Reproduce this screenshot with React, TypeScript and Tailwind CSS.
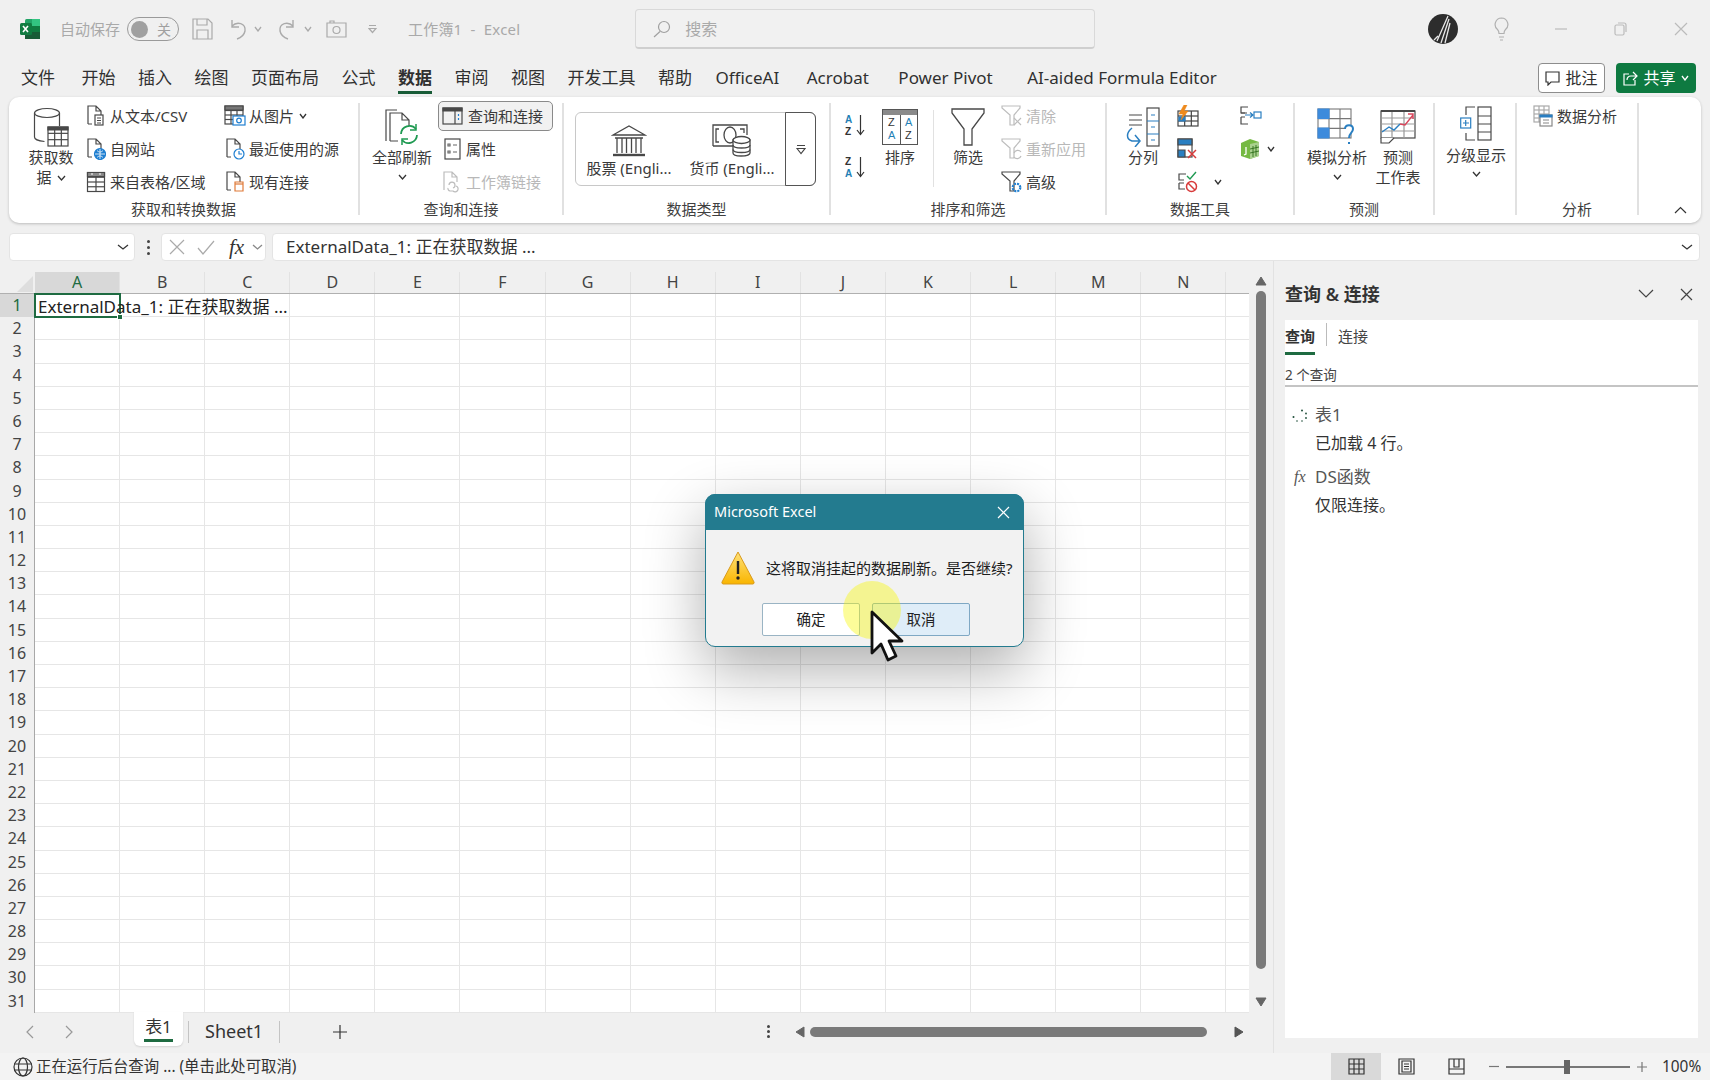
import React from "react";

type IP = { w: number; h: number; children?: React.ReactNode; c?: string; sw?: number; className?: string };
const S = ({ w, h, children, c = "#484848", sw = 1.2, className }: IP) => (
  <svg width={w} height={h} viewBox={`0 0 ${w} ${h}`} fill="none" stroke={c} strokeWidth={sw} className={className}>
    {children}
  </svg>
);
const Chev = ({ c = "#333", w = 9, className }: { c?: string; w?: number; className?: string }) => (
  <S w={w} h={6} c={c} sw={1.3} className={className}>
    <path d={`M1 1l${w / 2 - 1} ${4}l${w / 2 - 1} -${4}`} />
  </S>
);
const Doc = ({ c = "#484848" }: { c?: string }) => <path d="M2 19V1h8l5 5v7M10 1v5h5M2 19h4" stroke={c} />;

const ExcelIcon = () => (
  <svg width="22" height="22" viewBox="0 0 22 22">
    <rect x="6" y="1" width="15" height="20" rx="1.5" fill="#21a366" />
    <rect x="13" y="1" width="8" height="7" fill="#33c481" />
    <rect x="6" y="14" width="15" height="7" fill="#185c37" />
    <rect x="13" y="8" width="8" height="6" fill="#107c41" />
    <rect x="1" y="5" width="12" height="12" rx="1.5" fill="#107c41" />
    <path d="M4 8l5 6M9 8l-5 6" stroke="#fff" strokeWidth="1.6" />
  </svg>
);
const Grid3 = ({ x, y, w, h, cols, rows, c = "#484848" }: { x: number; y: number; w: number; h: number; cols: number; rows: number; c?: string }) => (
  <g stroke={c}>
    <rect x={x} y={y} width={w} height={h} fill="#fff" />
    {Array.from({ length: cols - 1 }, (_, i) => (
      <path key={i} d={`M${x + ((i + 1) * w) / cols} ${y}v${h}`} />
    ))}
    {Array.from({ length: rows - 1 }, (_, i) => (
      <path key={i} d={`M${x} ${y + ((i + 1) * h) / rows}h${w}`} />
    ))}
  </g>
);

const GetData = () => (
  <S w={36} h={40}>
    <ellipse cx="14" cy="6" rx="12.5" ry="4.5" />
    <path d="M1.5 6v24c0 2 4 4 10 4.500M26.500 6v13" />
    <Grid3 x={15} y={20} w={20} h={19} cols={3} rows={3} />
    <path d="M15 20h20v3H15z" fill="#484848" />
  </S>
);
const FromText = () => (
  <S w={20} h={22}>
    <Doc />
    <rect x="9" y="10" width="8" height="10" fill="#fff" />
    <path d="M11 13h4M11 15.500h4M11 18h4" />
  </S>
);
const FromWeb = () => (
  <S w={20} h={22}>
    <Doc />
    <circle cx="14" cy="16" r="5.500" fill="#1f7fd1" stroke="#1f7fd1" />
    <path d="M9 16h10M14 11v10M11 12.500c2 2 4 2 6 0M11 19.500c2-2 4-2 6 0" stroke="#fff" strokeWidth=".8" />
  </S>
);
const FromTable = () => (
  <S w={20} h={22}>
    <Grid3 x={1.500} y={1.500} w={17} h={19} cols={2} rows={4} />
    <path d="M1.500 1.500h17v4h-17z" fill="#8a8a8a" />
    <path d="M5 3h2M13 3h2" stroke="#fff" />
  </S>
);
const FromPic = () => (
  <S w={22} h={22}>
    <Grid3 x={1} y={1} w={18} h={18} cols={3} rows={4} />
    <path d="M1 1h18v4H1z" fill="#777" />
    <rect x="9" y="11" width="12" height="9" fill="#fff" stroke="#1f7fd1" />
    <circle cx="15" cy="15.500" r="2.300" stroke="#1f7fd1" />
  </S>
);
const Recent = () => (
  <S w={20} h={22}>
    <Doc />
    <circle cx="14" cy="16" r="5" fill="#fff" stroke="#1f7fd1" />
    <path d="M14 13v3h3" stroke="#1f7fd1" />
  </S>
);
const Existing = () => (
  <S w={20} h={22}>
    <Doc />
    <path d="M10 11h8v9h-8z" fill="#fff" stroke="#e07b39" />
    <path d="M10 13h8" stroke="#e07b39" />
  </S>
);
const RefreshAll = () => (
  <S w={38} h={40}>
    <path d="M3 34V3h11" />
    <path d="M7 34V6h12l7 7v6M19 6v7h7M7 34h8" />
    <path d="M18 27a8.500 8.500 0 0 1 15-5M34 28a8.500 8.500 0 0 1-15 5" stroke="#1f9a52" strokeWidth="1.800" />
    <path d="M33 17v6h-6M19 38v-6h6" stroke="#1f9a52" strokeWidth="1.500" />
  </S>
);
const QueryPane = () => (
  <S w={21} h={20}>
    <rect x="1" y="2" width="19" height="16" />
    <path d="M1 2h19v3H1z" fill="#484848" />
    <path d="M13 5v13" />
    <path d="M16.500 8v2M16.500 12v2" stroke="#1f7fd1" />
  </S>
);
const Props = () => (
  <S w={17} h={22}>
    <rect x="1" y="1" width="15" height="20" />
    <path d="M4 6h2v2H4zM4 13h2v2H4zM9 7h4M9 14h4" stroke="#666" />
  </S>
);
const WbLinks = () => (
  <S w={20} h={22} c="#bcbcbc">
    <path d="M2 19V1h8l5 5v5M10 1v5h5" />
    <path d="M7 14a3 3 0 1 1 4 3M14 15a3 3 0 1 1-3 5h-3a2.500 2.500 0 0 1-2-3" />
  </S>
);
const Bank = () => (
  <S w={36} h={32} sw={1.300}>
    <path d="M2 10L18 1l16 9z" />
    <path d="M4 13h28M6 13v15M11 13v15M15.500 13v15M20.500 13v15M25 13v15M30 13v15" />
    <path d="M2 30h32" strokeWidth="2.400" />
  </S>
);
const Currency = () => (
  <S w={40} h={34} sw={1.300}>
    <path d="M1 23V2h34v10M1 23h20" />
    <path d="M7 6H4v13h3M28 6h4v4" />
    <ellipse cx="18" cy="12" rx="6" ry="8" />
    <g fill="#fff">
      <path d="M21 17v13c0 2 4 3 8 3s9-1 9-3V17z" />
      <ellipse cx="29.500" cy="17" rx="8.500" ry="3.500" />
    </g>
    <path d="M21 22c0 2 4 3 8.500 3s8.500-1 8.500-3M21 26.500c0 2 4 3 8.500 3s8.500-1 8.500-3" />
  </S>
);
const SortAZ = ({ top, bot }: { top: string; bot: string }) => (
  <div className="relative w-[21px] h-[23px] font-['Liberation_Sans',sans-serif] text-[10px] leading-[11.500px] font-bold">
    <span className={`absolute left-0 top-0 ${top === "A" ? "text-[#1f7fb5]" : "text-[#333]"}`}>{top}</span>
    <span className={`absolute left-0 top-[11.500px] ${bot === "A" ? "text-[#1f7fb5]" : "text-[#333]"}`}>{bot}</span>
    <S w={9} h={22} c="#333" className="absolute left-[11px] top-0">
      <path d="M4.500 1v19M1 16l3.500 4.500L8 16" />
    </S>
  </div>
);
const SortIcon = () => (
  <div className="relative w-[36px] h-[36px] border border-[#555] bg-white font-['Liberation_Sans',sans-serif] text-[11px] leading-[13px]">
    <div className="h-[5px] bg-[#8a8a8a]" />
    <div className="absolute left-[17px] top-[5px] bottom-0 w-px bg-[#555]" />
    <span className="absolute left-[5px] top-[6px] text-[#333]">Z</span>
    <span className="absolute left-[5px] top-[19px] text-[#1f7fb5]">A</span>
    <span className="absolute left-[22px] top-[6px] text-[#1f7fb5]">A</span>
    <span className="absolute left-[22px] top-[19px] text-[#333]">Z</span>
  </div>
);
const Funnel = () => (
  <S w={36} h={38} sw={1.300}>
    <path d="M2 1h32v4L22 21v16h-8V21L2 5z" />
  </S>
);
const SmallFunnel = ({ c, kind }: { c: string; kind: "x" | "r" | "g" }) => (
  <S w={22} h={22} c={c}>
    <path d="M1 1h18v2l-6 7v10l-4 0V10L1 3z" fill="#fff" />
    {kind === "x" && <path d="M13 13l7 7M20 13l-7 7" />}
    {kind === "r" && <path d="M13 15a4 4 0 0 1 7-1M20 18a4 4 0 0 1-7 1" />}
    {kind === "g" && <circle cx="15.500" cy="16.500" r="3.800" stroke="#1f7fd1" strokeWidth="2.200" strokeDasharray="2 1" />}
  </S>
);
const TextCols = () => (
  <S w={38} h={40}>
    <path d="M5 8h13M5 13h13M5 18h13" />
    <rect x="23" y="1" width="12" height="38" />
    <path d="M23 14h12M23 27h12M27 8h4M27 20h4M27 33h4" stroke="#2a7fc1" />
    <path d="M8 21c-6 5-6 11 0 13h7M11 28l5 6-5 6" stroke="#2a7fc1" strokeWidth="1.500" />
  </S>
);
const FlashFill = () => (
  <S w={22} h={22}>
    <Grid3 x={1} y={6} w={20} h={15} cols={3} rows={3} c="#444" />
    <path d="M2 12h6v4H2z" fill="#2a7fc1" stroke="#2a7fc1" />
    <path d="M7 0L2 9h4l-2 6 7-9H7l3-6z" fill="#ee8a1d" stroke="#ee8a1d" strokeWidth=".6" />
  </S>
);
const RemoveDup = () => (
  <S w={22} h={22}>
    <rect x="1" y="1" width="14" height="18" />
    <path d="M1 1h14v6H1z" fill="#2a7fc1" />
    <path d="M1 12h7v7H1z" fill="#2a7fc1" />
    <path d="M11 12l8 8M19 12l-8 8" stroke="#d83b3b" strokeWidth="1.500" />
  </S>
);
const Validate = () => (
  <S w={22} h={22}>
    <path d="M9 3H2v6h5M2 12v6h6M2 12h5" />
    <path d="M10 5l3 3 6-7" stroke="#1f9a52" strokeWidth="1.400" />
    <circle cx="14.500" cy="15.500" r="5" stroke="#d83b3b" strokeWidth="1.500" />
    <path d="M11 12l7 7" stroke="#d83b3b" strokeWidth="1.500" />
  </S>
);
const Consolidate = () => (
  <S w={22} h={20}>
    <path d="M8 1H1v6h6M1 11v7h7" />
    <path d="M1 7h4M1 11h4" />
    <path d="M5 9h8M10 6.500L13 9l-3 2.500" stroke="#2a7fc1" />
    <rect x="14" y="6" width="7" height="6" stroke="#2a7fc1" />
  </S>
);
const DataModel = () => (
  <svg width="20" height="22" viewBox="0 0 20 22">
    <path d="M1 5l9-4 9 3v14l-9 3-9-3z" fill="#75b943" />
    <path d="M10 6l9-2v14l-9 3z" fill="#a9d18e" />
    <path d="M13 8v11M16 7v11M10 11l9-2M10 15l9-2" stroke="#2f6f1c" strokeWidth=".9" />
    <path d="M6 9v7l-2 1" stroke="#fff" strokeWidth="1.300" fill="none" />
  </svg>
);
const WhatIf = () => (
  <S w={40} h={38} sw={1.100}>
    <Grid3 x={1} y={1} w={33} h={29} cols={3} rows={3} c="#777" />
    <path d="M1 1h11v9.500H1zM1 20h11v10H1z" fill="#3d8bdc" stroke="#3d8bdc" />
    <path d="M28 21c0-5 8-5 8 0 0 4-4 4-4 9M32 34v2" stroke="#2a7fc1" strokeWidth="2" fill="#fff" />
  </S>
);
const Forecast = () => (
  <S w={36} h={34}>
    <rect x="1" y="1" width="34" height="27" />
    <path d="M1 8h34M1 14h34M1 21h34M12 1v27M24 1v27" stroke="#999" />
    <path d="M1 1h34" strokeWidth="2" />
    <path d="M2 22l7-5 5 3 6-6" stroke="#2a7fc1" strokeWidth="1.400" />
    <path d="M20 14l5 1 8-10M28 4h5v5" stroke="#d8455b" strokeWidth="1.400" />
    <path d="M1 28v5h8l5-5" fill="#fff" />
  </S>
);
const Outline = () => (
  <S w={32} h={36}>
    <path d="M15 1H6v8M15 34H6v-7" />
    <rect x="0.700" y="12" width="10" height="10" stroke="#2a7fc1" />
    <path d="M3 17h6M5.700 14v6" stroke="#2a7fc1" />
    <rect x="18" y="1" width="13" height="33" />
    <path d="M18 10h13M18 18h13M18 26h13" />
  </S>
);
const DataAnalysis = () => (
  <S w={20} h={22} c="#999">
    <Grid3 x={1} y={1} w={15} h={16} cols={3} rows={4} c="#aaa" />
    <rect x="7" y="10" width="12" height="11" fill="#fff" stroke="#888" />
    <path d="M7 10h12v2H7z" fill="#2a7fc1" stroke="#2a7fc1" />
    <path d="M10 15h6M10 18h6" stroke="#888" />
  </S>
);

const Small = ({ icon, label, gray, extra }: { icon: React.ReactNode; label: string; gray?: boolean; extra?: React.ReactNode }) => (
  <div className="h-[28px] flex items-center whitespace-nowrap">
    <div className="w-[22px] flex justify-center shrink-0">{icon}</div>
    <span className={`ml-[3px] text-[15px] ${gray ? "text-[#b8b8b8]" : "text-[#3a3a3a]"}`}>{label}</span>
    {extra}
  </div>
);
const Big = ({ icon, lines, chev, w }: { icon: React.ReactNode; lines: string[]; chev?: boolean; w: string }) => (
  <div className={`${w} shrink-0 pt-[5px] flex flex-col items-center text-[15px] text-[#3a3a3a] leading-[19px]`}>
    <div className="h-[40px] flex items-center justify-center">{icon}</div>
    <div className="mt-[1px] whitespace-nowrap">{lines[0]}</div>
    {lines[1] && (
      <div className="mt-px whitespace-nowrap flex items-center gap-[5px]">
        {lines[1]}
        {chev && <Chev />}
      </div>
    )}
    {!lines[1] && chev && (
      <div className="h-[20px] flex items-center">
        <Chev />
      </div>
    )}
  </div>
);
const Group = ({ w, label, children, sep = true }: { w: string; label?: string; children: React.ReactNode; sep?: boolean }) => (
  <div className={`${w} shrink-0 h-[112px] mt-[6px] flex flex-col ${sep ? "border-r-2 border-[#e1e1e1]" : ""}`}>
    <div className="h-[100px] flex -translate-y-px">{children}</div>
    <div className="h-[12px] leading-[12px] text-[15px] text-[#3f3f3f] text-center whitespace-nowrap">{label}</div>
  </div>
);

const tabs: [string, string][] = [
  ["文件", "-ml-px"],
  ["开始", "ml-[4px]"],
  ["插入", ""],
  ["绘图", ""],
  ["页面布局", ""],
  ["公式", ""],
  ["数据", "font-semibold"],
  ["审阅", ""],
  ["视图", ""],
  ["开发工具", ""],
  ["帮助", ""],
  ["OfficeAI", "ml-[1px]"],
  ["Acrobat", "ml-[5px]"],
  ["Power Pivot", "ml-[7px]"],
  ["AI-aided Formula Editor", "ml-[12px]"],
];

const cols = ["A", "B", "C", "D", "E", "F", "G", "H", "I", "J", "K", "L", "M", "N"];
const rows = Array.from({ length: 31 }, (_, i) => i + 1);

const TitleBar = () => (
  <div className="h-[62px] pb-[4px] flex items-center text-[15px] text-[#a9a9a9]">
    <div className="ml-[19px] w-[22px] flex"><ExcelIcon /></div>
    <span className="ml-[19px] whitespace-nowrap">自动保存</span>
    <div className="ml-[7px] w-[52px] h-[24px] rounded-full border border-[#9a9a9a] flex items-center pl-[3px] text-[14px] text-[#a0a0a0]">
      <div className="w-[17px] h-[17px] rounded-full bg-[#a0a0a0]" />
      <span className="ml-[9px]">关</span>
    </div>
    <S w={21} h={22} c="#aaa" className="ml-[13px]">
      <path d="M1 1h15l4 4v16H1zM5 1v6h10V1M5 21v-9h11v9" />
    </S>
    <S w={19} h={22} c="#aaa" sw={1.400} className="ml-[15px]">
      <path d="M4 2v7h7M4 8c5-5 14-3 13 5-1 5-5 7-8 8" />
    </S>
    <Chev c="#aaa" w={8} className="ml-[7px]" />
    <S w={19} h={22} c="#aaa" sw={1.400} className="ml-[16px]">
      <path d="M15 2v7H8M15 8C10 3 1 5 2 13c1 5 5 7 8 8" />
    </S>
    <Chev c="#aaa" w={8} className="ml-[7px]" />
    <S w={21} h={18} c="#aaa" className="ml-[14px]">
      <path d="M1 3h19v14H1zM4 3V1h4v2" />
      <circle cx="10.500" cy="10" r="3.500" />
    </S>
    <S w={9} h={10} c="#aaa" className="ml-[21px]">
      <path d="M1 1.500h7M1 4.500l3.500 4 3.500-4z" />
    </S>
    <span className="ml-[31px] whitespace-nowrap tracking-[0.2px]">工作簿1&nbsp; -&nbsp; Excel</span>
    <div className="ml-[115px] w-[460px] h-[40px] border border-[#d9d9d9] border-b-[2px] border-b-[#cfcfcf] rounded-[4px] bg-[#f1f1f1] flex items-center">
      <S w={18} h={18} c="#a0a0a0" className="ml-[17px]">
        <circle cx="11" cy="7" r="5.500" />
        <path d="M7 11.500L1 17" />
      </S>
      <span className="ml-[14px] text-[16px]">搜索</span>
    </div>
    <div className="ml-[333px] relative w-[30px] h-[30px] rounded-full bg-[#2d2d2d] overflow-hidden">
      <svg width="30" height="30" viewBox="0 0 30 30" className="absolute inset-0">
        <path d="M20 2L9 27M21 5L13 29M22 9L17 29M10 22l-4 4" stroke="#e8e8e8" strokeWidth="1.300" />
      </svg>
    </div>
    <S w={15} h={24} c="#b0b0b0" className="ml-[36px]">
      <path d="M7.500 1a6.500 6.500 0 0 0-4 11.500c1 1 1.500 2 1.500 4h5c0-2 .5-3 1.500-4A6.500 6.500 0 0 0 7.500 1zM5 20h5M6 23h3" />
    </S>
    <S w={14} h={4} c="#bbb" className="ml-[45px]">
      <path d="M1 2h12" />
    </S>
    <S w={13} h={14} c="#bbb" className="ml-[46px]">
      <rect x="1" y="3" width="9" height="10" rx="1.500" />
      <path d="M4 1h6a2 2 0 0 1 2 2v7" />
    </S>
    <S w={14} h={14} c="#bbb" className="ml-[47px]">
      <path d="M1 1l12 12M13 1L1 13" />
    </S>
  </div>
);

const TabRow = () => (
  <div className="h-[35px] flex items-start pl-[22px] gap-[22.500px] text-[17px] text-[#303030] leading-[34px] relative -mt-[1px]">
    {tabs.map(([t, c]) => (
      <div key={t} className={`relative whitespace-nowrap ${c}`}>
        {t}
        {t === "数据" && <div className="absolute left-0 right-0 top-[30px] h-[2.500px] bg-[#185c37]" />}
      </div>
    ))}
    <div className="absolute left-[1538px] top-[2px] w-[67px] h-[30px] border border-[#8d8d8d] rounded-[4px] bg-white flex items-center justify-center gap-[5px] text-[16px]">
      <S w={15} h={15} c="#333"><path d="M1 1h13v10H6l-3 3v-3H1z" /></S>
      批注
    </div>
    <div className="absolute left-[1616px] top-[2px] w-[80px] h-[30px] rounded-[4px] bg-[#0e7a41] flex items-center justify-center gap-[5px] text-[16px] text-white">
      <S w={15} h={15} c="#fff"><path d="M10 1l4 4-4 4M14 5H8c-3 0-4 2-4 4M6 3H1v11h11V9" /></S>
      共享
      <Chev c="#fff" w={8} />
    </div>
  </div>
);

const Ribbon = () => (
  <div className="mx-[9px] w-[1692px] h-[126px] bg-white rounded-[10px] shadow-[0_1px_3px_rgba(0,0,0,0.22)] flex">
    <Group w="w-[351px]" label="获取和转换数据">
      <div className="ml-[17px]" />
      <Big w="w-[50px]" icon={<GetData />} lines={["获取数", "据"]} chev />
      <div className="ml-[9px] w-[137px]">
        <Small icon={<FromText />} label="从文本/CSV" />
        <div className="mt-[5px]" />
        <Small icon={<FromWeb />} label="自网站" />
        <div className="mt-[5px]" />
        <Small icon={<FromTable />} label="来自表格/区域" />
      </div>
      <div className="ml-[2px]">
        <Small icon={<FromPic />} label="从图片" extra={<Chev w={8} className="ml-[5px]" />} />
        <div className="mt-[5px]" />
        <Small icon={<Recent />} label="最近使用的源" />
        <div className="mt-[5px]" />
        <Small icon={<Existing />} label="现有连接" />
      </div>
    </Group>
    <Group w="w-[204px]" label="查询和连接">
      <div className="ml-[9px]" />
      <Big w="w-[66px]" icon={<RefreshAll />} lines={["全部刷新"]} chev />
      <div className="ml-[3px]">
        <div className="relative h-[28px] flex items-center">
          <div className="absolute left-0 top-[-1px] w-[115px] h-[30px] border border-[#8a8a8a] rounded-[5px] bg-[#f1f1f1]" />
          <div className="relative flex items-center pl-[4px] whitespace-nowrap">
            <QueryPane />
            <span className="ml-[5px] text-[15px] text-[#3a3a3a]">查询和连接</span>
          </div>
        </div>
        <div className="mt-[5px] pl-[3px]"><Small icon={<Props />} label="属性" /></div>
        <div className="mt-[5px] pl-[3px]"><Small icon={<WbLinks />} label="工作簿链接" gray /></div>
      </div>
    </Group>
    <Group w="w-[267px]" label="数据类型">
      <div className="ml-[11px] mt-[10px] w-[241px] h-[74px] border border-[#c8c8c8] rounded-[6px] flex">
        <div className="w-[210px] flex pt-[12px]">
          <div className="w-[106px] flex flex-col items-center text-[15px] text-[#3a3a3a]">
            <Bank />
            <span className="whitespace-nowrap">股票 (Engli...</span>
          </div>
          <div className="w-[100px] -mt-[2px] flex flex-col items-center text-[15px] text-[#3a3a3a]">
            <Currency />
            <span className="whitespace-nowrap">货币 (Engli...</span>
          </div>
        </div>
        <div className="flex-1 -m-px border border-[#555] rounded-r-[6px] flex items-center justify-center">
          <S w={10} h={11} c="#444"><path d="M1 1.500h8M1 4.500l4 5 4-5z" /></S>
        </div>
      </div>
    </Group>
    <Group w="w-[276px]" label="排序和筛选">
      <div className="ml-[14px] pt-[12px] w-[21px]">
        <SortAZ top="A" bot="Z" />
        <div className="mt-[19px]"><SortAZ top="Z" bot="A" /></div>
      </div>
      <Big w="w-[36px] ml-[16px]" icon={<SortIcon />} lines={["排序"]} />
      <div className="ml-[15px] mt-[8px] h-[77px] w-px bg-[#e1e1e1]" />
      <Big w="w-[36px] ml-[16px]" icon={<Funnel />} lines={["筛选"]} />
      <div className="ml-[15px]">
        <Small icon={<SmallFunnel c="#bdbdbd" kind="x" />} label="清除" gray />
        <div className="mt-[5px]" />
        <Small icon={<SmallFunnel c="#bdbdbd" kind="r" />} label="重新应用" gray />
        <div className="mt-[5px]" />
        <Small icon={<SmallFunnel c="#484848" kind="g" />} label="高级" />
      </div>
    </Group>
    <Group w="w-[188px]" label="数据工具">
      <Big w="w-[40px] ml-[16px]" icon={<TextCols />} lines={["分列"]} />
      <div className="ml-[14px] w-[52px] flex flex-col gap-[5px]">
        <div className="h-[28px] flex items-center"><FlashFill /></div>
        <div className="h-[28px] flex items-center"><RemoveDup /></div>
        <div className="h-[28px] flex items-center">
          <Validate />
          <Chev w={8} className="ml-[15px]" />
        </div>
      </div>
      <div className="ml-[11px] flex flex-col gap-[5px]">
        <div className="h-[28px] flex items-center"><Consolidate /></div>
        <div className="h-[28px] flex items-center">
          <DataModel />
          <Chev w={8} className="ml-[7px]" />
        </div>
      </div>
    </Group>
    <Group w="w-[140px]" label="预测">
      <Big w="w-[62px] ml-[11px]" icon={<WhatIf />} lines={["模拟分析"]} chev />
      <Big w="w-[48px] ml-[6px]" icon={<Forecast />} lines={["预测", "工作表"]} />
    </Group>
    <Group w="w-[82px]">
      <div className="ml-[10px] w-[62px] flex flex-col items-center text-[15px] text-[#3a3a3a] leading-[20px] pt-[4px]">
        <Outline />
        <span className="mt-[3px] whitespace-nowrap">分级显示</span>
        <div className="h-[18px] flex items-center"><Chev /></div>
      </div>
    </Group>
    <Group w="w-[122px]" label="分析">
      <div className="ml-[15px]">
        <Small icon={<DataAnalysis />} label="数据分析" />
      </div>
    </Group>
    <div className="flex-1 flex justify-center items-end pb-[9px] pl-[20px]">
      <S w={13} h={8} c="#333"><path d="M1 7l5.500-5.500L12 7" /></S>
    </div>
  </div>
);

const FormulaBar = () => (
  <div className="mt-[10px] h-[28px] flex items-stretch">
    <div className="ml-[9px] w-[126px] bg-white rounded-[4px] border border-[#e4e4e4] flex items-center justify-end pr-[5px]">
      <Chev w={12} c="#333" />
    </div>
    <div className="w-[26px] flex flex-col items-center justify-center gap-[3px]">
      {[0, 1, 2].map((i) => (
        <div key={i} className="w-[3px] h-[3px] rounded-full bg-[#444]" />
      ))}
    </div>
    <div className="w-[105px] bg-white rounded-[4px] border border-[#e4e4e4] flex items-center text-[#333]">
      <S w={16} h={16} c="#aaa" className="ml-[7px]"><path d="M1 1l14 14M15 1L1 15" /></S>
      <S w={18} h={15} c="#aaa" className="ml-[12px]"><path d="M1 8l5 6L17 1" /></S>
      <span className="ml-[14px] text-[21px] leading-none italic font-['Liberation_Serif',serif]">fx</span>
      <Chev w={11} c="#888" className="ml-[8px]" />
    </div>
    <div className="ml-[6px] w-[1428px] bg-white rounded-[4px] border border-[#e4e4e4] flex items-center pl-[13px] text-[17px] text-[#333]">
      <span className="flex-1 whitespace-nowrap">ExternalData_1: 正在获取数据 ...</span>
      <Chev w={12} c="#333" className="mr-[6px]" />
    </div>
  </div>
);

const Sheet = () => (
  <div className="w-[1249px] pt-[11px]">
    <div className="h-[22px] flex border-b border-[#b0b0b0]">
      <div className="w-[35px] shrink-0 flex items-end justify-end pr-[2px] pb-[1px]">
        <svg width="16" height="16"><path d="M16 0v16H0z" fill="#dedede" /></svg>
      </div>
      {cols.map((c) => (
        <div
          key={c}
          className={`w-[85.100px] shrink-0 text-center text-[16px] leading-[20px] border-r border-[#e2e2e2] ${
            c === "A" ? "bg-[#d8d8d8] text-[#1e6b41]" : "text-[#444]"
          }`}
        >
          {c}
        </div>
      ))}
    </div>
    {rows.map((r) => (
      <div key={r} className="h-[23.200px] flex">
        <div
          className={`w-[35px] shrink-0 text-center text-[16px] leading-[23px] border-r border-[#a8a8a8] ${
            r === 1 ? "bg-[#d8d8d8] text-[#1e6b41]" : "text-[#444]"
          }`}
        >
          {r}
        </div>
        {r === 1 ? (
          <>
            <div className="relative w-[85.100px] shrink-0 bg-white">
              <div className="absolute -left-px -top-px w-[87px] h-[25px] border-2 border-[#1e6b41] z-10" />
              <div className="absolute right-[-3px] bottom-[-3px] w-[6px] h-[6px] bg-[#1e6b41] border border-white z-20" />
              <span className="absolute left-[3px] top-0 z-20 whitespace-nowrap text-[17px] leading-[25px] text-[#222]">ExternalData_1: 正在获取数据 ...</span>
            </div>
            <div className="w-[170.200px] shrink-0 bg-white border-r border-b border-[#e6e6e6]" />
            {cols.slice(3).map((c) => (
              <div key={c} className="w-[85.100px] shrink-0 bg-white border-r border-b border-[#e6e6e6]" />
            ))}
            <div className="flex-1 bg-white border-b border-[#e6e6e6]" />
          </>
        ) : (
          <>
            {cols.map((c) => (
              <div key={c} className="w-[85.100px] shrink-0 bg-white border-r border-b border-[#e6e6e6]" />
            ))}
            <div className="flex-1 bg-white border-b border-[#e6e6e6]" />
          </>
        )}
      </div>
    ))}
  </div>
);

const VScroll = () => (
  <div className="w-[24px] pt-[15px] flex flex-col items-center">
    <svg width="12" height="10"><path d="M6 1l5 8H1z" fill="#666" stroke="#666" strokeLinejoin="round" /></svg>
    <div className="mt-[5px] w-[10px] h-[678px] rounded-full bg-[#7a7a7a]" />
    <svg width="12" height="10" className="mt-[28px]"><path d="M6 9L1 1h10z" fill="#666" stroke="#666" strokeLinejoin="round" /></svg>
  </div>
);

const SheetTabs = () => (
  <div className="h-[40px] -mt-px flex items-center text-[#333]">
    <S w={9} h={14} c="#999" className="ml-[25px]"><path d="M8 1L2 7l6 6" /></S>
    <S w={9} h={14} c="#999" className="ml-[31px]"><path d="M1 1l6 6-6 6" /></S>
    <div className="ml-[60px] w-[49px] h-[34px] -mt-[6px] bg-white rounded-b-[6px] shadow-[0_1px_2px_rgba(0,0,0,0.12)] relative text-center text-[17px] leading-[30px]">
      表1
      <div className="absolute left-[10px] right-[10px] bottom-[4px] h-[2.500px] bg-[#1e6b41]" />
    </div>
    <div className="ml-[5px] w-px h-[22px] bg-[#c4c4c4]" />
    <span className="ml-[16px] w-[57px] text-[18px] whitespace-nowrap">Sheet1</span>
    <div className="ml-[17px] w-px h-[22px] bg-[#c4c4c4]" />
    <S w={14} h={14} c="#333" className="ml-[53px]"><path d="M7 0v14M0 7h14" /></S>
    <div className="ml-[420px] flex flex-col gap-[2px]">
      {[0, 1, 2].map((i) => (
        <div key={i} className="w-[3px] h-[3px] rounded-full bg-[#444]" />
      ))}
    </div>
    <svg width="10" height="12" className="ml-[25px]"><path d="M1 6l8-5v10z" fill="#666" stroke="#666" strokeLinejoin="round" /></svg>
    <div className="ml-[5px] w-[397px] h-[10px] rounded-full bg-[#7a7a7a]" />
    <svg width="10" height="12" className="ml-[27px]"><path d="M9 6L1 1v10z" fill="#555" stroke="#555" strokeLinejoin="round" /></svg>
  </div>
);

const Pane = () => (
  <div className="flex-1 pl-[11px] pr-[12px]">
    <div className="h-[59px] pt-[7px] flex items-center">
      <span className="text-[18px] font-semibold text-[#333] flex-1 whitespace-nowrap">查询 &amp; 连接</span>
      <S w={16} h={10} c="#444" className="mr-[26px]"><path d="M1 1l7 7 7-7" /></S>
      <S w={13} h={13} c="#444" className="mr-[5px]"><path d="M1 1l11 11M12 1L1 12" /></S>
    </div>
    <div className="w-[413px] h-[718px] bg-white">
      <div className="h-[35px] flex items-start pt-[3px] text-[15px] relative">
        <div className="relative font-semibold text-[#333] leading-[26px]">
          查询
          <div className="absolute left-0 w-[30px] top-[29px] h-[3px] bg-[#1e6b41]" />
        </div>
        <div className="ml-[11px] w-px h-[23px] bg-[#bbb]" />
        <div className="ml-[11px] text-[#444] leading-[26px]">连接</div>
      </div>
      <div className="h-[32px] pt-[11px] text-[13.500px] leading-[18px] text-[#444] border-b-2 border-[#c4c4c4]">2 个查询</div>
      <div className="pt-[16px] flex">
        <div className="w-[30px] pl-[7px] pt-[6px]">
          <svg width="16" height="14" viewBox="0 0 16 14" fill="#1f4f3a">
            <circle cx="10" cy="1.500" r="1" /><circle cx="14" cy="4.500" r=".9" /><circle cx="14" cy="9" r=".9" />
            <circle cx="10" cy="12" r=".8" /><circle cx="5" cy="12" r=".8" /><circle cx="1.500" cy="8" r="1" />
          </svg>
        </div>
        <div>
          <div className="text-[17px] leading-[24px] text-[#555]">表1</div>
          <div className="mt-[4px] text-[16px] leading-[24px] text-[#333]">已加载 4 行。</div>
        </div>
      </div>
      <div className="pt-[10px] flex">
        <div className="w-[30px] pl-[9px] font-['Liberation_Serif',serif] italic text-[16px] leading-[24px] text-[#555]">fx</div>
        <div>
          <div className="text-[17px] leading-[24px] text-[#555]">DS函数</div>
          <div className="mt-[4px] text-[16px] leading-[24px] text-[#333]">仅限连接。</div>
        </div>
      </div>
    </div>
  </div>
);

const StatusBar = () => (
  <div className="h-[27px] bg-[#f3f3f3] flex items-center text-[15.400px] text-[#333] shrink-0">
    <svg width="20" height="20" viewBox="0 0 20 20" fill="none" stroke="#333" strokeWidth="1.200" className="ml-[13px]">
      <circle cx="10" cy="10" r="9" />
      <ellipse cx="10" cy="10" rx="4.500" ry="9" />
      <path d="M1 7h18M1 13h18" />
    </svg>
    <span className="ml-[3px] w-[1295px] whitespace-nowrap">正在运行后台查询 ... (单击此处可取消)</span>
    <div className="w-[50px] h-full bg-[#d9d9d9] flex items-center justify-center">
      <S w={17} h={17} c="#333"><path d="M1 1h15v15H1zM1 6h15M1 11h15M6 1v15M11 1v15" /></S>
    </div>
    <div className="w-[50px] flex justify-center">
      <S w={17} h={17} c="#333"><path d="M1 1h15v15H1zM4 3h9v11H4zM6 6h5M6 8.500h5M6 11h5" /></S>
    </div>
    <div className="w-[50px] flex justify-center">
      <S w={17} h={17} c="#333"><path d="M1 1h15v15H1zM6 1v8h5V1M1 11h15" /></S>
    </div>
    <S w={10} h={3} c="#777" className="ml-[8px]"><path d="M0 1.500h10" /></S>
    <div className="ml-[7px] w-[124px] h-[2px] bg-[#777] relative">
      <div className="absolute left-[58px] top-[-6px] w-[6px] h-[14px] bg-[#666]" />
    </div>
    <S w={10} h={10} c="#777" className="ml-[7px]"><path d="M0 5h10M5 0v10" /></S>
    <span className="ml-[15px] whitespace-nowrap">100%</span>
  </div>
);

const Dialog = () => (
  <div className="absolute left-[705px] top-[494px] w-[319px] h-[153px] rounded-[10px] border border-[#237b8f] bg-[#f2f2f2] shadow-[0_22px_60px_rgba(0,0,0,0.32)] z-30">
    <div className="h-[36px] -mt-px -mx-px bg-[#237b8f] rounded-t-[10px] flex items-center pl-[9px] pr-[14px] text-white text-[14.500px]">
      <span className="flex-1">Microsoft Excel</span>
      <S w={13} h={13} c="#fff"><path d="M1 1l11 11M12 1L1 12" /></S>
    </div>
    <div className="flex items-center h-[73px] pl-[14px] pt-[3px]">
      <svg width="36" height="36" viewBox="0 0 36 36">
        <defs>
          <linearGradient id="wg" x1="0" y1="0" x2="0" y2="1">
            <stop offset="0" stopColor="#ffe27a" />
            <stop offset="1" stopColor="#f9b500" />
          </linearGradient>
        </defs>
        <path d="M18 2L34 32a1.500 1.500 0 0 1-1 2H3a1.500 1.500 0 0 1-1-2z" fill="url(#wg)" stroke="#d99a1c" strokeLinejoin="round" />
        <rect x="16.800" y="11" width="2.400" height="13" fill="#222" />
        <circle cx="18" cy="28" r="1.700" fill="#222" />
      </svg>
      <span className="ml-[10px] text-[15px] text-[#1e1e1e] whitespace-nowrap">这将取消挂起的数据刷新。是否继续?</span>
    </div>
    <div className="flex">
      <div className="ml-[56px] w-[98px] h-[33px] rounded-[2px] border border-[#9ab4c4] bg-white flex items-center justify-center text-[14.500px] text-[#222]">确定</div>
      <div className="ml-[12px] w-[98px] h-[33px] rounded-[2px] border border-[#7fa8c4] bg-[#dfedf8] flex items-center justify-center text-[14.500px] text-[#222]">取消</div>
    </div>
  </div>
);

const Pointer = () => (
  <>
    <div className="absolute left-[843px] top-[581px] w-[58px] h-[58px] rounded-full bg-[#f7f700]/40 z-40" />
    <svg width="36" height="54" viewBox="-2 -2 36 54" className="absolute left-[870px] top-[610px] z-50">
      <path d="M0 0V41L9 32L16 48L24 44L17 29H30Z" fill="#fff" stroke="#111" strokeWidth="2.800" strokeLinejoin="round" />
    </svg>
  </>
);

export default function App() {
  return (
    <div className="relative w-[1710px] h-[1080px] overflow-hidden bg-[#f0f0f0] flex flex-col font-['Noto_Sans','Noto_Sans_CJK_SC',sans-serif]">
      <TitleBar />
      <TabRow />
      <div className="mt-px" />
      <Ribbon />
      <FormulaBar />
      <div className="flex-1 flex min-h-0">
        <div className="w-[1274px] shrink-0 border-r border-[#e2e2e2] flex flex-col">
          <div className="flex">
            <Sheet />
            <VScroll />
          </div>
          <SheetTabs />
        </div>
        <Pane />
      </div>
      <StatusBar />
      <Dialog />
      <Pointer />
    </div>
  );
}
